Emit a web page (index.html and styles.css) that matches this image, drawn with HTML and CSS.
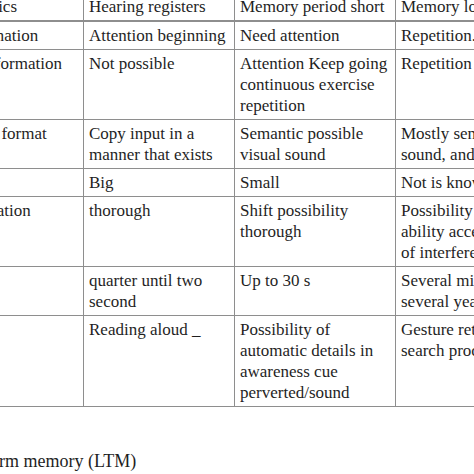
FILE: index.html
```html
<!DOCTYPE html>
<html>
<head>
<meta charset="utf-8">
<link rel="stylesheet" href="styles.css">
</head>
<body>
<div class="page">
  <table class="memory">
    <thead>
      <tr>
        <th class="c1">Characteristics</th>
        <th class="c2">Hearing registers</th>
        <th class="c3">Memory period short</th>
        <th class="c4">Memory long term</th>
      </tr>
    </thead>
    <tbody>
      <tr>
        <td>Entry information</td>
        <td>Attention beginning</td>
        <td>Need attention</td>
        <td>Repetition.</td>
      </tr>
      <tr>
        <td>Maintain information</td>
        <td>Not possible</td>
        <td>Attention Keep going<br>continuous exercise<br>repetition</td>
        <td>Repetition</td>
      </tr>
      <tr>
        <td>Information format</td>
        <td>Copy input in a<br>manner that exists</td>
        <td>Semantic possible<br>visual sound</td>
        <td>Mostly semantic,<br>sound, and visual</td>
      </tr>
      <tr>
        <td>Capacity</td>
        <td>Big</td>
        <td>Small</td>
        <td>Not is known limit</td>
      </tr>
      <tr>
        <td>Lost information</td>
        <td>thorough</td>
        <td>Shift possibility<br>thorough</td>
        <td>Possibility no loss<br>ability access loss<br>of interference</td>
      </tr>
      <tr>
        <td>Duration</td>
        <td>quarter until two<br>second</td>
        <td>Up to 30 s</td>
        <td>Several minutes to<br>several years</td>
      </tr>
      <tr>
        <td>Retrieval</td>
        <td>Reading aloud _</td>
        <td>Possibility of<br>automatic details in<br>awareness cue<br>perverted/sound</td>
        <td>Gesture retrieval<br>search process</td>
      </tr>
    </tbody>
  </table>
  <p class="caption">Long-term memory (LTM)</p>
</div>
</body>
</html>
```

FILE: styles.css
```css
html, body {
  margin: 0;
  padding: 0;
  background: #ffffff;
  overflow: hidden;
}

body {
  width: 474px;
  height: 474px;
  font-family: "Liberation Serif", "Times New Roman", serif;
  color: #1f1f1f;
}

.page {
  margin-top: -7px;
  margin-left: -89px;
  width: 665px;
}

.memory {
  border-collapse: separate;
  border-spacing: 0;
  table-layout: fixed;
  width: 665px;
  font-size: 17px;
  line-height: 21px;
}

.memory th,
.memory td {
  box-sizing: border-box;
  padding: 3px 5px;
  text-align: left;
  vertical-align: top;
  font-weight: normal;
  white-space: nowrap;
  overflow: hidden;
  border-right: 1px solid #8e8e8e;
  border-bottom: 1px solid #8e8e8e;
}

.memory th {
  border-bottom: 2px solid #8e8e8e;
}

.memory td:last-child,
.memory th:last-child {
  border-right: none;
}

.c1 { width: 173px; }
.c2 { width: 151px; }
.c3 { width: 161px; }
.c4 { width: 180px; }

.caption {
  margin: 43px 0 0 0;
  padding-left: 31px;
  font-size: 18px;
  line-height: 22px;
}
```
